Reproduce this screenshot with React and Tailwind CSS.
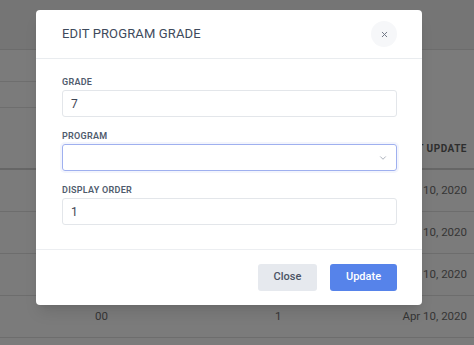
import { ChevronDown, X } from 'lucide-react';

const ROWS = [
  { a: '', b: '', c: '10, 2020' },
  { a: '', b: '', c: '10, 2020' },
  { a: '', b: '', c: '10, 2020' },
  { a: '00', b: '1', c: 'Apr 10, 2020' },
];

function Field({ label, children, className = '' }) {
  return (
    <div className={className}>
      <p className="text-[9px] leading-[12px] font-semibold uppercase tracking-[0.03em] text-[#4f5b6d] mb-[2px]">{label}</p>
      {children}
    </div>
  );
}

function Backdrop() {
  return (
    <div className="w-[474px] h-[345px] bg-[#7b7b7b] overflow-hidden text-[#333]">
      <div className="h-[50px] bg-[#757575] border-b border-[#6c6c6c]" />
      <div className="h-[78px] pt-[31px]">
        <div className="w-[100px] h-[27px] border-y border-[#6e6e6e]" />
      </div>
      <div className="h-[42px] flex items-end pb-[13px] justify-end pr-[7px] border-b-2 border-[#666]">
        <span className="text-[10px] leading-[12px] font-bold uppercase tracking-[0.05em] text-[#2e2e2e]">Last Update</span>
      </div>
      {ROWS.map((r, i) => (
        <div key={i} className="h-[42px] flex items-center border-b border-[#6d6d6d] text-[11.5px] text-[#353535]">
          <span className="pl-[95px] w-[275px]">{r.a}</span>
          <span className="w-[20px]">{r.b}</span>
          <span className="flex-1 text-right pr-[7px]">{r.c}</span>
        </div>
      ))}
    </div>
  );
}

export default function App() {
  return (
    <div className="relative w-[474px] h-[345px]" style={{ fontFamily: 'Roboto, "Noto Sans", sans-serif' }}>
      <Backdrop />
      <div className="absolute left-[36px] top-[10px] w-[386px] bg-white rounded-[4px] shadow-lg">
        <div className="h-[49px] flex items-center justify-between pl-[26px] pr-[25px] border-b border-[#e9ecef]">
          <h2 className="text-[13px] text-[#3e4a5c] tracking-[0.01em]">EDIT PROGRAM GRADE</h2>
          <button className="w-[26px] h-[26px] rounded-full bg-[#f6f7f9] flex items-center justify-center text-[#6b7280]">
            <X size={9} strokeWidth={2.5} />
          </button>
        </div>
        <div className="pl-[26px] pr-[25px] pt-[17px] pb-[24px]">
          <Field label="Grade">
            <div className="h-[27px] border border-[#e3e6ea] rounded-[3px] flex items-center pl-[8px] text-[12px] text-[#3f4654]">7</div>
          </Field>
          <Field label="Program" className="mt-[13px]">
            <div className="h-[27px] border border-[#9fb0ef] rounded-[3px] flex items-center justify-end pr-[8px] shadow-[0_0_0_2px_rgba(99,130,235,0.08)]">
              <ChevronDown size={10} strokeWidth={2} className="text-[#9aa1ad]" />
            </div>
          </Field>
          <Field label="Display Order" className="mt-[13px]">
            <div className="h-[27px] border border-[#e3e6ea] rounded-[3px] flex items-center pl-[8px] text-[12px] text-[#3f4654]">1</div>
          </Field>
        </div>
        <div className="h-[56px] border-t border-[#eceef1] flex items-center justify-end gap-[13px] pr-[25px]">
          <button className="w-[59px] h-[27px] rounded-[3px] bg-[#e6e9ee] text-[11px] font-medium text-[#4a5364]">Close</button>
          <button className="w-[67px] h-[27px] rounded-[3px] bg-[#5683ea] text-[11px] font-medium text-white">Update</button>
        </div>
      </div>
    </div>
  );
}
